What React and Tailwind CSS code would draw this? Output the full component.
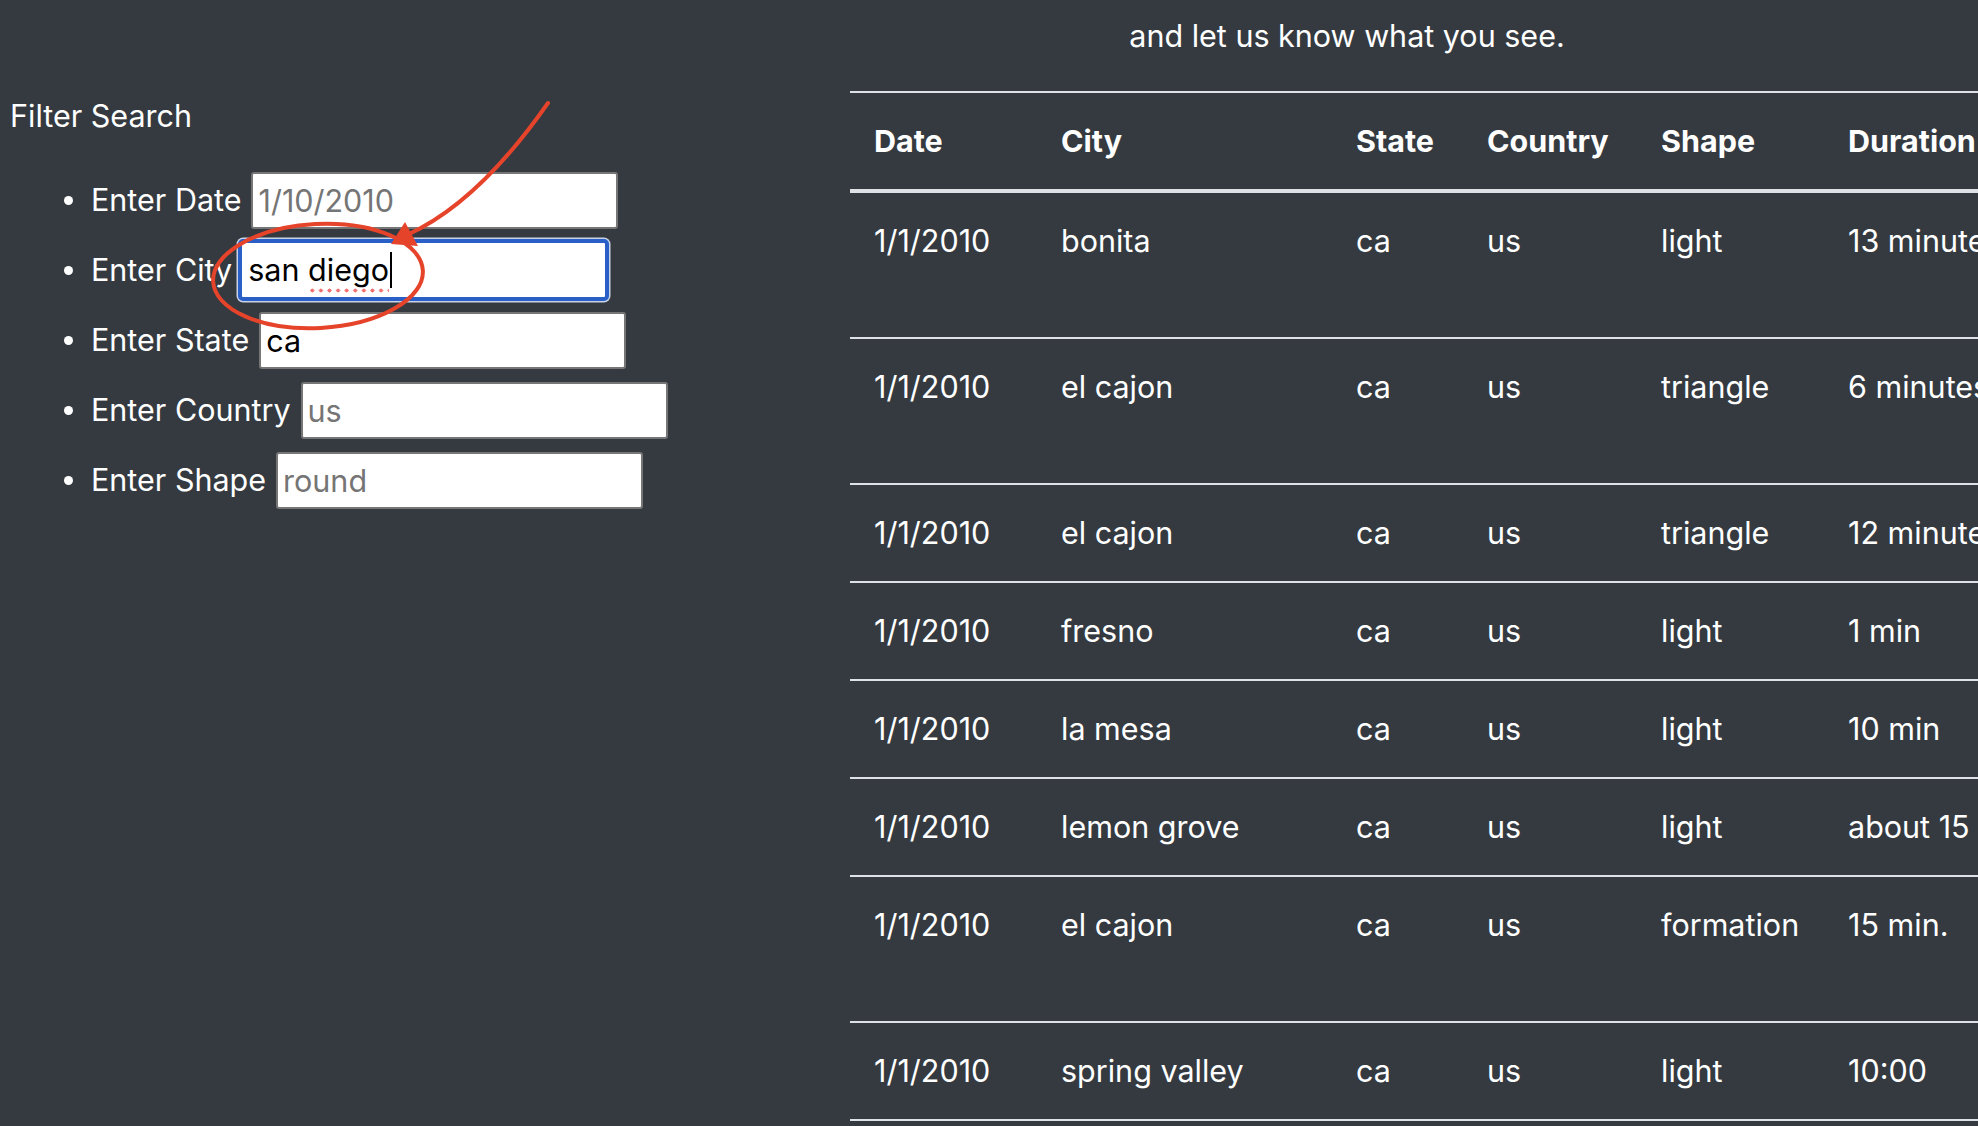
import React from "react";

const rows = [
  { date: "1/1/2010", city: "bonita", state: "ca", country: "us", shape: "light", duration: "13 minutes", tall: true },
  { date: "1/1/2010", city: "el cajon", state: "ca", country: "us", shape: "triangle", duration: "6 minutes", tall: true },
  { date: "1/1/2010", city: "el cajon", state: "ca", country: "us", shape: "triangle", duration: "12 minutes" },
  { date: "1/1/2010", city: "fresno", state: "ca", country: "us", shape: "light", duration: "1 min" },
  { date: "1/1/2010", city: "la mesa", state: "ca", country: "us", shape: "light", duration: "10 min" },
  { date: "1/1/2010", city: "lemon grove", state: "ca", country: "us", shape: "light", duration: "about 15 minutes" },
  { date: "1/1/2010", city: "el cajon", state: "ca", country: "us", shape: "formation", duration: "15 min.", tall: true },
  { date: "1/1/2010", city: "spring valley", state: "ca", country: "us", shape: "light", duration: "10:00" },
];

function Bullet() {
  return <span className="w-[9px] h-[9px] rounded-full bg-white ml-[64px] mr-[18px] shrink-0" />;
}

function FilterInput({ placeholder, value }) {
  return (
    <input
      type="text"
      readOnly
      placeholder={placeholder}
      defaultValue={value}
      className="ml-[10px] w-[367px] h-[57px] border-2 border-[#767676] rounded-[3px] bg-white px-[5px] text-black text-[30.5px] placeholder:text-[#757575] outline-none"
    />
  );
}

function App() {
  return (
    <div
      className="relative w-full h-[1126px] bg-[#343a40] text-white overflow-hidden flex text-[30.5px]"
      style={{ fontFamily: "Inter, 'Noto Sans', sans-serif" }}
    >
      {/* filter column */}
      <div className="w-[850px] shrink-0">
        <div className="mt-[92px] pl-[10px] leading-[47px]">Filter Search</div>
        <ul className="mt-[26px]">
          <li className="flex items-center h-[70px]">
            <Bullet />
            <span>Enter Date</span>
            <FilterInput placeholder="1/10/2010" />
          </li>
          <li className="flex items-center h-[70px]">
            <Bullet />
            <span>Enter City</span>
            <div className="ml-[6px] w-[371px] h-[62px] rounded-[5px] border-[4px] border-[#2a5fc8] ring-[1.5px] ring-[#c9d3e6] bg-white px-[6px] flex items-center text-black">
              <span>
                san{" "}
                <span className="relative">
                  diego
                  <span className="absolute left-0 right-0 bottom-[-5px] h-[5px] bg-[radial-gradient(circle,#f07373_1.8px,transparent_2.2px)] bg-[length:8.6px_5px]" />
                </span>
              </span>
              <span className="w-[2px] h-[36px] bg-black ml-[1px]" />
            </div>
          </li>
          <li className="flex items-center h-[70px]">
            <Bullet />
            <span>Enter State</span>
            <FilterInput value="ca" />
          </li>
          <li className="flex items-center h-[70px]">
            <Bullet />
            <span>Enter Country</span>
            <FilterInput placeholder="us" />
          </li>
          <li className="flex items-center h-[70px]">
            <Bullet />
            <span>Enter Shape</span>
            <FilterInput placeholder="round" />
          </li>
        </ul>
      </div>

      {/* results column */}
      <div className="flex-1 min-w-0">
        <div className="w-[994px] text-center leading-[47px] mt-[12px]">and let us know what you see.</div>
        <table className="mt-[32px] w-[1500px] table-fixed border-collapse">
          <colgroup>
            <col className="w-[187px]" />
            <col className="w-[295px]" />
            <col className="w-[131px]" />
            <col className="w-[174px]" />
            <col className="w-[187px]" />
            <col className="w-[526px]" />
          </colgroup>
          <thead>
            <tr className="border-t-2 border-b-4 border-[#dee2e6]">
              {["Date", "City", "State", "Country", "Shape", "Duration"].map((h) => (
                <th key={h} className="text-left font-bold px-[24px] py-[24px] leading-[48px] whitespace-nowrap">
                  {h}
                </th>
              ))}
            </tr>
          </thead>
          <tbody>
            {rows.map((r, i) => (
              <tr key={i} className="border-b-2 border-[#dee2e6]">
                {[r.date, r.city, r.state, r.country, r.shape, r.duration].map((c, j) => (
                  <td key={j} className="align-top px-[24px] py-[24px] leading-[48px] whitespace-nowrap">
                    <div className={r.tall ? "h-[96px]" : "h-[48px]"}>{c}</div>
                  </td>
                ))}
              </tr>
            ))}
          </tbody>
        </table>
      </div>

      {/* red annotation */}
      <svg className="absolute inset-0 pointer-events-none" width="1978" height="1126" viewBox="0 0 1978 1126">
        <path d="M548 103 Q 478 203 407 235" fill="none" stroke="#e6432b" strokeWidth="4" strokeLinecap="round" />
        <polygon points="391,244 405,222 418,246" fill="#e6432b" />
        <ellipse cx="318" cy="276" rx="105" ry="52" fill="none" stroke="#e6432b" strokeWidth="4" transform="rotate(-3 318 276)" />
      </svg>
    </div>
  );
}

export default App;
